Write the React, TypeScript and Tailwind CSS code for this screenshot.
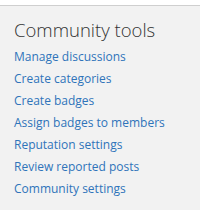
export default function App() {
  const links = [
    "Manage discussions",
    "Create categories",
    "Create badges",
    "Assign badges to members",
    "Reputation settings",
    "Review reported posts",
    "Community settings",
  ];
  return (
    <div className="w-[200px] h-[210px] bg-white pt-[5px] font-['Open_Sans',sans-serif]">
      <div className="h-[205px] bg-[#f2f2f2] border-t border-[#cfcfcf] pl-[14px] pt-[13px]">
        <h2 className="text-[18.5px] leading-[22px] font-light text-[#333333]">Community tools</h2>
        <ul className="mt-[5px] flex flex-col">
          {links.map((l) => (
            <li key={l} className="h-[22px] leading-[22px] text-[12px] text-[#2f74ba]">
              <a href="#">{l}</a>
            </li>
          ))}
        </ul>
      </div>
    </div>
  );
}
